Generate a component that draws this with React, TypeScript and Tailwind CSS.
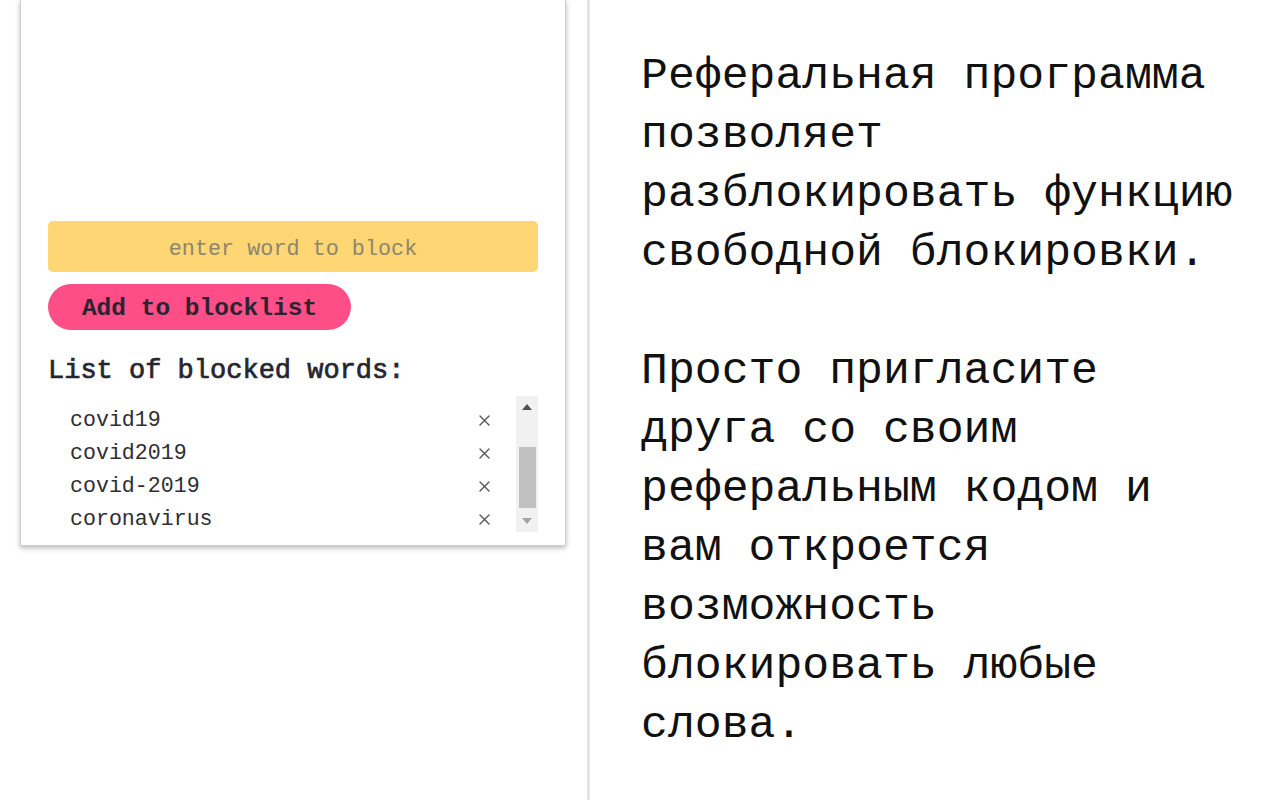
import React from "react";

const mono = { fontFamily: '"Liberation Mono", "DejaVu Sans Mono", monospace' };

function XMark() {
  return (
    <svg width="11" height="11" viewBox="0 0 11 11" className="shrink-0">
      <path d="M1 1 L10 10 M10 1 L1 10" stroke="#555" strokeWidth="1.4" strokeLinecap="round" />
    </svg>
  );
}

export default function App() {
  const words = ["covid19", "covid2019", "covid-2019", "coronavirus"];
  return (
    <div className="w-[1280px] h-[800px] bg-white flex overflow-hidden" style={mono}>
      {/* left column */}
      <div className="w-[587px] shrink-0 flex flex-col">
        <div className="ml-[20px] w-[546px] bg-white border-x border-b border-[#cfcfcf] shadow-[0_2px_5px_rgba(0,0,0,0.28)] flex flex-col px-[27px] pt-[221px] pb-[13px]">
          <input
            readOnly
            placeholder="enter word to block"
            className="h-[51px] w-full rounded-[5px] bg-[#fed674] pt-[6px] text-center text-[21.8px] outline-none placeholder:text-[#8c8570]"
            style={mono}
          />
          <button
            className="mt-[12px] h-[46px] w-[303px] rounded-full bg-[#fd4e87] pt-[4px] text-[24.5px] font-bold text-[#2b2331] flex items-center justify-center"
            style={mono}
          >
            Add to blocklist
          </button>
          <div className="mt-[25px] text-[27px] leading-[32px] font-normal text-[#262630] [-webkit-text-stroke:0.7px_#262630]">
            List of blocked words:
          </div>
          <div className="mt-[9px] h-[136px] flex">
            <div className="flex-1 overflow-hidden pt-[8px]">
              {words.map((w) => (
                <div key={w} className="h-[33px] flex items-center justify-between pl-[22px] pr-[26px]">
                  <span className="text-[21.6px] leading-[33px] text-[#2e2e33]">{w}</span>
                  <XMark />
                </div>
              ))}
            </div>
            <div className="w-[22px] h-full bg-[#f1f1f1] flex flex-col items-center">
              <div className="h-[22px] flex items-center justify-center">
                <svg width="10" height="6" viewBox="0 0 10 6">
                  <path d="M5 0 L10 6 L0 6 Z" fill="#505050" />
                </svg>
              </div>
              <div className="h-[29px]" />
              <div className="w-[17px] h-[61px] bg-[#c1c1c1]" />
              <div className="flex-1" />
              <div className="h-[22px] flex items-center justify-center">
                <svg width="10" height="6" viewBox="0 0 10 6">
                  <path d="M0 0 L10 0 L5 6 Z" fill="#a3a3a3" />
                </svg>
              </div>
            </div>
          </div>
        </div>
      </div>
      {/* divider */}
      <div className="w-[3px] h-full bg-[#e2e2e2] shrink-0" />
      {/* right column */}
      <div className="pl-[51px] pt-[47px]">
        <div className="w-[600px] text-[44.8px] leading-[59px] text-[#111]">
          <p>Реферальная программа позволяет разблокировать функцию свободной блокировки.</p>
          <p className="mt-[59px]">
            Просто пригласите друга со своим реферальным кодом и вам откроется возможность блокировать любые слова.
          </p>
        </div>
      </div>
    </div>
  );
}
